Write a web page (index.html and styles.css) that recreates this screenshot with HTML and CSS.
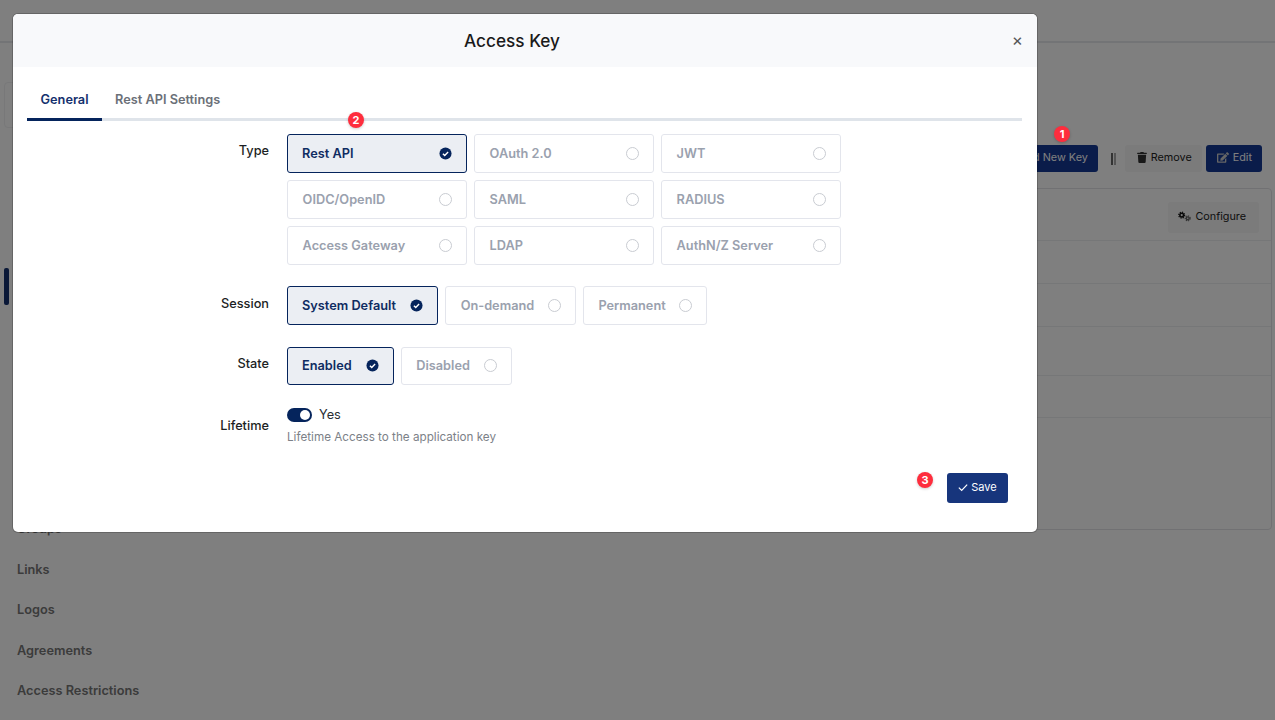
FILE: index.html
```html
<!DOCTYPE html>
<html>
<head>
    <title>Access Key</title>
    <link rel="stylesheet" href="styles.css">
</head>
<body>
    <div class="page">
        <div class="topbar"></div>
        <div class="layout">
            <div class="sidebar">
                <div class="side-box"></div>
                <div class="nav-active"></div>
                <div class="nav-item">Groups</div>
                <div class="nav-item">Links</div>
                <div class="nav-item">Logos</div>
                <div class="nav-item">Agreements</div>
                <div class="nav-item">Access Restrictions</div>
            </div>
            <div class="main">
                <div class="toolbar">
                    <button class="btn btn-dark">Add New Key</button>
                    <span class="divider"></span>
                    <button class="btn btn-light">
                        <svg class="icon trash" viewBox="0 0 448 512"><path d="M432 32H312l-9.4-18.7A24 24 0 0 0 281.1 0H166.8a23.72 23.72 0 0 0-21.4 13.3L136 32H16A16 16 0 0 0 0 48v32a16 16 0 0 0 16 16h416a16 16 0 0 0 16-16V48a16 16 0 0 0-16-16zM53.2 467a48 48 0 0 0 47.9 45h245.8a48 48 0 0 0 47.9-45L416 128H32z"/></svg>
                        Remove
                    </button>
                    <button class="btn btn-dark">
                        <svg class="icon edit" viewBox="0 0 576 512"><path d="M402.6 83.2l90.2 90.2c3.8 3.8 3.8 10 0 13.8L274.4 405.6l-92.8 10.3c-12.4 1.4-22.9-9.1-21.5-21.5l10.3-92.8L388.8 83.2c3.8-3.8 10-3.8 13.8 0zm162-22.9l-48.8-48.8c-15.2-15.2-39.9-15.2-55.2 0l-35.4 35.4c-3.8 3.8-3.8 10 0 13.8l90.2 90.2c3.8 3.8 10 3.8 13.8 0l35.4-35.4c15.2-15.3 15.2-40 0-55.2zM384 346.2V448H64V128h229.8c3.2 0 6.2-1.3 8.5-3.5l40-40c7.6-7.6 2.2-20.5-8.5-20.5H48C21.5 64 0 85.5 0 112v352c0 26.5 21.5 48 48 48h352c26.5 0 48-21.5 48-48V306.2c0-10.7-12.9-16-20.5-8.5l-40 40c-2.2 2.3-3.5 5.3-3.5 8.5z"/></svg>
                        Edit
                    </button>
                </div>
                <div class="card">
                    <div class="card-head">
                        <button class="btn btn-light btn-tall">
                            <svg class="icon cogs" viewBox="0 0 14 11">
                                <circle class="gear-hub" cx="4" cy="4" r="2"/>
                                <circle class="gear-teeth" cx="4" cy="4" r="3.2"/>
                                <circle class="gear-hub gear-small" cx="10.5" cy="7.5" r="1.6"/>
                                <circle class="gear-teeth gear-small" cx="10.5" cy="7.5" r="2.7"/>
                            </svg>
                            Configure
                        </button>
                    </div>
                    <div class="card-row row-a"></div>
                    <div class="card-row row-a"></div>
                    <div class="card-row row-b"></div>
                    <div class="card-row row-c"></div>
                </div>
            </div>
        </div>
    </div>

    <div class="overlay"></div>

    <div class="modal">
        <div class="modal-head">
            <span class="modal-title">Access Key</span>
            <span class="close">&times;</span>
        </div>
        <div class="modal-body">
            <div class="tabs">
                <div class="tab active">General</div>
                <div class="tab">Rest API Settings</div>
            </div>

            <div class="form-row row-type">
                <div class="label">Type</div>
                <div class="options options-grid">
                    <div class="option selected"><span>Rest API</span><svg class="tick" viewBox="0 0 14 14"><circle cx="7" cy="7" r="6.5"/><path d="M4.2 7.2l2 2 3.6-3.8"/></svg></div>
                    <div class="option"><span>OAuth 2.0</span><i class="radio"></i></div>
                    <div class="option"><span>JWT</span><i class="radio"></i></div>
                    <div class="option"><span>OIDC/OpenID</span><i class="radio"></i></div>
                    <div class="option"><span>SAML</span><i class="radio"></i></div>
                    <div class="option"><span>RADIUS</span><i class="radio"></i></div>
                    <div class="option"><span>Access Gateway</span><i class="radio"></i></div>
                    <div class="option"><span>LDAP</span><i class="radio"></i></div>
                    <div class="option"><span>AuthN/Z Server</span><i class="radio"></i></div>
                </div>
            </div>

            <div class="form-row row-session">
                <div class="label">Session</div>
                <div class="options">
                    <div class="option selected"><span>System Default</span><svg class="tick" viewBox="0 0 14 14"><circle cx="7" cy="7" r="6.5"/><path d="M4.2 7.2l2 2 3.6-3.8"/></svg></div>
                    <div class="option"><span>On-demand</span><i class="radio"></i></div>
                    <div class="option"><span>Permanent</span><i class="radio"></i></div>
                </div>
            </div>

            <div class="form-row row-state">
                <div class="label">State</div>
                <div class="options">
                    <div class="option selected"><span>Enabled</span><svg class="tick" viewBox="0 0 14 14"><circle cx="7" cy="7" r="6.5"/><path d="M4.2 7.2l2 2 3.6-3.8"/></svg></div>
                    <div class="option"><span>Disabled</span><i class="radio"></i></div>
                </div>
            </div>

            <div class="form-row row-lifetime">
                <div class="label">Lifetime</div>
                <div>
                    <div class="switch-line">
                        <span class="switch"></span>
                        <span>Yes</span>
                    </div>
                    <div class="help">Lifetime Access to the application key</div>
                </div>
            </div>

            <div class="modal-foot">
                <button class="save">
                    <svg class="save-check" viewBox="0 0 12 10"><path d="M1 5.2l3.4 3.3L11 1.5"/></svg>
                    Save
                </button>
            </div>
        </div>
    </div>

    <div class="badge badge-1">1</div>
    <div class="badge badge-2">2</div>
    <div class="badge badge-3">3</div>
</body>
</html>
```

FILE: styles.css
```css
* {
    box-sizing: border-box;
}
body {
    margin: 0;
    font-family: Inter, "Noto Sans", sans-serif;
    background: #fff;
    overflow: hidden;
    height: 720px;
}
button {
    font-family: inherit;
}

/* page behind the dialog */
.page {
    height: 720px;
}
.topbar {
    height: 43px;
    border-bottom: 2px solid #e6e8ec;
}
.layout {
    display: flex;
}
.sidebar {
    width: 240px;
    padding-top: 39px;
}
.side-box {
    width: 200px;
    height: 46px;
    margin-left: 4px;
    border: 1px solid #f0f1f3;
    border-radius: 4px;
}
.nav-active {
    width: 5px;
    height: 37px;
    margin: 140px 0 204px 4px;
    background: #14306e;
    border-radius: 2px;
}
.nav-item {
    height: 40.5px;
    line-height: 40.5px;
    padding-left: 17px;
    font-size: 12.75px;
    font-weight: 600;
    color: #777;
}
.main {
    flex: 1;
    padding: 102px 3px 0 0;
}
.toolbar {
    display: flex;
    justify-content: flex-end;
    align-items: center;
    gap: 4px;
    padding-right: 10px;
}
.btn {
    height: 27px;
    padding: 0 10px 3px 11px;
    border: 0;
    border-radius: 3px;
    font-size: 10.8px;
    font-weight: 400;
    display: flex;
    align-items: center;
    gap: 4px;
}
.btn-dark {
    background: #143894;
    color: #fff;
}
.btn-light {
    background: #f6f6f6;
    color: #222;
    padding-left: 12px;
}
.btn-tall {
    height: 31px;
    padding: 0 13px 1px 10px;
}
.divider {
    width: 5px;
    height: 12px;
    margin: 0 5px 0 9px;
    border-left: 2px solid #666;
    border-right: 2px solid #aaa;
}
.icon {
    display: block;
    fill: currentColor;
}
.trash {
    width: 10px;
    height: 11px;
    color: #333;
}
.edit {
    width: 12px;
    height: 11px;
    color: #ccc;
}
.cogs {
    width: 13px;
    height: 11px;
}
.gear-hub {
    fill: none;
    stroke: #111;
    stroke-width: 1.6;
}
.gear-teeth {
    fill: none;
    stroke: #111;
    stroke-width: 1.2;
    stroke-dasharray: 1.3 1.2;
}
.gear-small {
    stroke: #666;
}
.card {
    margin-top: 16px;
    height: 342px;
    border: 1px solid #e2e3e6;
    border-radius: 4px;
}
.card-head {
    height: 52px;
    display: flex;
    justify-content: flex-end;
    align-items: center;
    padding: 5px 12px 0 0;
    border-bottom: 1px solid #eceef0;
}
.card-row {
    border-bottom: 1px solid #eceef0;
}
.row-a {
    height: 43px;
}
.row-b {
    height: 49px;
}
.row-c {
    height: 42px;
}

/* dialog */
.overlay {
    position: absolute;
    inset: 0;
    background: rgba(0, 0, 0, 0.5);
}
.modal {
    position: absolute;
    left: 13px;
    top: 14px;
    width: 1024px;
    height: 518px;
    background: #fff;
    border-radius: 5px;
    box-shadow: 0 0 0 1px rgba(0, 0, 0, 0.2);
    overflow: hidden;
}
.modal-head {
    height: 53px;
    padding-right: 26px;
    background: #f8f9fb;
    display: flex;
    align-items: center;
    justify-content: center;
    position: relative;
}
.modal-title {
    font-size: 17.2px;
    font-weight: 500;
    color: #1a1a1a;
}
.close {
    position: absolute;
    right: 14px;
    top: 16px;
    font-size: 17px;
    line-height: 20px;
    color: #555;
}
.modal-body {
    padding: 0 15px 0 14px;
}
.tabs {
    display: flex;
    height: 54px;
    border-bottom: 3px solid #dfe4ea;
}
.tab {
    height: 54px;
    padding: 25px 13px 0 13px;
    font-size: 12.75px;
    line-height: 15px;
    font-weight: 600;
    color: #6b7078;
}
.tab.active {
    width: 75px;
    padding-left: 13.5px;
    color: #14306e;
    border-bottom: 3px solid #05245c;
}
.form-row {
    display: grid;
    grid-template-columns: 242px 1fr;
    column-gap: 18px;
    margin-left: -14px;
    padding-left: 14px;
}
.row-type {
    margin-top: 13px;
}
.row-session {
    margin-top: 21px;
}
.row-state {
    margin-top: 22px;
}
.row-lifetime {
    margin-top: 22px;
    align-items: center;
}
.label {
    text-align: right;
    font-size: 12.75px;
    font-weight: 500;
    color: #1c1f24;
    padding-top: 8.5px;
}
.row-session .label {
    padding-top: 9.5px;
}
.row-lifetime .label {
    padding-top: 1px;
}
.options {
    display: flex;
    gap: 7px;
}
.options-grid {
    display: grid;
    grid-template-columns: repeat(3, 180px);
    gap: 7px;
}
.option {
    height: 39px;
    padding: 0 14px 0 14.6px;
    border: 1px solid #e3e5ec;
    border-radius: 3px;
    display: flex;
    align-items: center;
    justify-content: space-between;
    gap: 13.6px;
    font-size: 12.75px;
    font-weight: 600;
    color: #9aa1ae;
}
.row-state .option {
    height: 38px;
    padding-bottom: 1px;
}
.option.selected {
    padding-left: 14px;
    gap: 14px;
    background: #ebeef3;
    border-color: #05245c;
    color: #0f2c62;
}
.radio {
    width: 13px;
    height: 13px;
    border: 1px solid #c9ccd2;
    border-radius: 50%;
    background: #fff;
}
.tick {
    width: 13px;
    height: 13px;
}
.tick circle {
    fill: #05245c;
}
.tick path {
    fill: none;
    stroke: #fff;
    stroke-width: 1.5;
}
.switch-line {
    display: flex;
    align-items: center;
    gap: 7px;
    font-size: 12.75px;
    color: #2a2d33;
}
.switch {
    width: 25px;
    height: 14px;
    border-radius: 7px;
    background: #05245c;
    position: relative;
}
.switch::after {
    content: "";
    position: absolute;
    right: 2px;
    top: 2px;
    width: 10px;
    height: 10px;
    border-radius: 50%;
    background: #fff;
}
.help {
    margin-top: 7.5px;
    font-size: 11.7px;
    color: #7c8188;
}
.modal-foot {
    display: flex;
    justify-content: flex-end;
    padding-right: 14px;
    margin-top: 29.5px;
}
.save {
    height: 30px;
    width: 61px;
    padding: 0 0 2px;
    border: 0;
    border-radius: 3px;
    background: #17357c;
    color: #fff;
    font-size: 11px;
    font-weight: 400;
    display: flex;
    align-items: center;
    justify-content: center;
    gap: 3px;
}
.save-check {
    width: 10px;
    height: 9px;
    fill: none;
    stroke: #fff;
    stroke-width: 1.5;
}

/* numbered callouts */
.badge {
    position: absolute;
    width: 16px;
    height: 16px;
    border-radius: 50%;
    background: #fe2d3d;
    color: #fff;
    font-size: 11px;
    font-weight: 700;
    line-height: 16px;
    text-align: center;
    box-shadow: 0 1px 3px rgba(0, 0, 0, 0.2);
}
.badge-1 {
    left: 1054px;
    top: 126px;
}
.badge-2 {
    left: 348px;
    top: 112px;
}
.badge-3 {
    left: 917px;
    top: 472px;
}
```
